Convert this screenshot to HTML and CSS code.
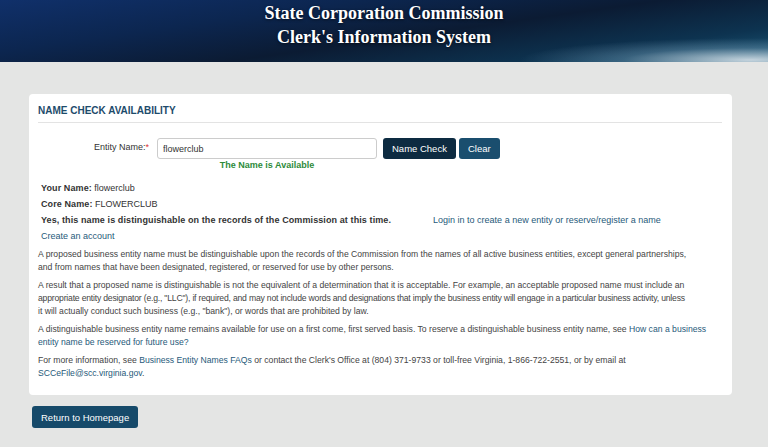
FILE: index.html
```html
<!DOCTYPE html>
<html lang="en">
<head>
    <meta charset="UTF-8">
    <meta name="viewport" content="width=device-width, initial-scale=1.0">
    <title>Name Check Availability</title>
    <link rel="stylesheet" href="styles.css">
</head>
<body>
    <div class="header">
        <h1>State Corporation Commission<br>Clerk's Information System</h1>
    </div>

    <div class="page">
        <div class="card">
            <h2>NAME CHECK AVAILABILITY</h2>

            <div class="search-row">
                <label for="entityName">Entity Name:<span class="req">*</span></label>
                <div class="field">
                    <input type="text" id="entityName" value="flowerclub">
                    <div class="available">The Name is Available</div>
                </div>
                <button type="button" class="btn btn-dark">Name Check</button>
                <button type="button" class="btn">Clear</button>
            </div>

            <div class="result">
                <p><b>Your Name:</b> flowerclub</p>
                <p><b>Core Name:</b> FLOWERCLUB</p>
                <div class="result-row">
                    <p><b>Yes, this name is distinguishable on the records of the Commission at this time.</b></p>
                    <a href="#">Login in to create a new entity or reserve/register a name</a>
                </div>
                <p><a href="#">Create an account</a></p>
            </div>

            <div class="info">
                <p>A proposed business entity name must be distinguishable upon the records of the Commission from the names of all active business entities, except general partnerships,<br>and from names that have been designated, registered, or reserved for use by other persons.</p>
                <p>A result that a proposed name is distinguishable is not the equivalent of a determination that it is acceptable. For example, an acceptable proposed name must include an<br><span class="tight">appropriate entity designator (e.g., "LLC"), if required, and may not include words and designations that imply the business entity will engage in a particular business activity, unless</span><br>it will actually conduct such business (e.g., "bank"), or words that are prohibited by law.</p>
                <p>A distinguishable business entity name remains available for use on a first come, first served basis. To reserve a distinguishable business entity name, see <a href="#">How can a business<br>entity name be reserved for future use?</a></p>
                <p>For more information, see <a href="#">Business Entity Names FAQs</a> or contact the Clerk's Office at (804) 371-9733 or toll-free Virginia, 1-866-722-2551, or by email at<br><a href="#">SCCeFile@scc.virginia.gov</a>.</p>
            </div>
        </div>

        <button type="button" class="btn btn-home">Return to Homepage</button>
    </div>
</body>
</html>
```

FILE: styles.css
```css
body {
    margin: 0;
    font-family: "Liberation Sans", Arial, sans-serif;
    font-size: 9px;
    color: #333;
    background-color: #e4e5e4;
}
.header {
    height: 62px;
    box-sizing: border-box;
    padding-top: 1px;
    background:
        radial-gradient(ellipse 230px 22px at 750px 60px, rgba(215, 225, 232, 0.9), rgba(130, 165, 190, 0.35) 55%, transparent 100%),
        linear-gradient(172deg, #10306a 0%, #0c2650 30%, #0b1b33 55%, #0d3350 80%, #1c5b7a 100%);
    text-align: center;
}
.header h1 {
    margin: 0;
    font-family: "Liberation Serif", "Times New Roman", serif;
    font-size: 18px;
    line-height: 24px;
    font-weight: bold;
    color: #fff;
    text-shadow: 0 1px 3px rgba(0, 0, 0, 0.6);
}
.page {
    padding: 32px 36px 20px 29px;
}
.card {
    background-color: #fff;
    border-radius: 4px;
    padding: 9px 10px 15px 9px;
    width: 684px;
}
.card h2 {
    margin: 0;
    padding: 2px 0 6px 0;
    font-size: 10px;
    font-weight: bold;
    color: #1d4b6b;
    border-bottom: 1px solid #e3e3e3;
}
.search-row {
    display: flex;
    align-items: flex-start;
    margin-top: 15px;
}
.search-row label {
    width: 111px;
    text-align: right;
    padding-top: 4px;
    padding-right: 8px;
    color: #333;
}
.req {
    color: #d33;
}
.field {
    width: 220px;
    margin-right: 6px;
}
.field input {
    width: 100%;
    height: 21px;
    box-sizing: border-box;
    border: 1px solid #ccc;
    border-radius: 3px;
    padding: 0 5px;
    font-family: "Liberation Sans", Arial, sans-serif;
    font-size: 9px;
    color: #333;
}
.available {
    text-align: center;
    font-weight: bold;
    color: #2e8b3a;
    margin-top: 1px;
}
.btn {
    height: 21px;
    padding: 0 9px;
    margin-right: 3px;
    border: none;
    border-radius: 3px;
    background-color: #1a4e6e;
    color: #fff;
    font-family: "Liberation Sans", Arial, sans-serif;
    font-size: 9.5px;
    cursor: pointer;
}
.btn-dark {
    background-color: #0d2b41;
}
.result {
    margin-top: 10px;
    padding-left: 3px;
}
.result p {
    margin: 0;
    line-height: 16px;
}
.result b {
    letter-spacing: 0.1px;
}
.result-row {
    display: flex;
}
.result-row a {
    margin-left: 42px;
    line-height: 16px;
}
a {
    color: #1f5a7a;
    text-decoration: none;
}
.info {
    max-width: 684px;
    font-size: 8.65px;
}
.info p {
    margin: 5px 0 0 0;
    line-height: 13px;
    color: #444;
}
.info p:first-child {
    margin-top: 4px;
}
.tight {
    letter-spacing: -0.2px;
}
.btn-home {
    margin-top: 11px;
    margin-left: 3px;
    height: 22px;
    padding: 0 9px;
    background-color: #164a6a;
}
```
